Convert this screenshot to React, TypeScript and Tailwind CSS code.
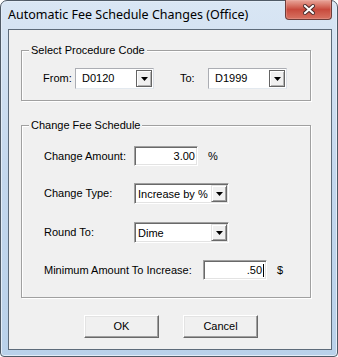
import React from 'react';

const body = { fontFamily: '"Liberation Sans", Arial, sans-serif' };

function Arrow() {
  return (
    <svg width="7" height="4" viewBox="0 0 7 4">
      <polygon points="0,0 7,0 3.5,4" fill="#000" />
    </svg>
  );
}

// editable combo (first group): thin themed border, framed button
function EditCombo({ value }: { value: string }) {
  return (
    <div className="flex h-[21px] w-[79px] shrink-0 items-center border border-t-[#abadb3] border-l-[#abadb3] border-r-[#dbdfe6] border-b-[#e3e9ef] bg-white pl-[6px] pr-px">
      <span className="flex-1 whitespace-nowrap text-[11px] leading-none text-black">{value}</span>
      <div className="flex h-[17px] w-[16px] items-center justify-center border border-[#646464] bg-[#f0f0f0] shadow-[inset_1px_1px_0_#fff,inset_-1px_-1px_0_#b4b4b4]">
        <Arrow />
      </div>
    </div>
  );
}

// drop-down list: classic sunken frame, raised button
function ListCombo({ value }: { value: string }) {
  return (
    <div className="flex h-[21px] w-[95px] shrink-0 items-center border border-t-[#a0a0a0] border-l-[#a0a0a0] border-r-white border-b-white bg-white pl-[3px] pr-px shadow-[inset_1px_1px_0_#696969,inset_-1px_-1px_0_#e3e3e3]">
      <span className="flex-1 whitespace-nowrap pt-px text-[11px] leading-none text-black">{value}</span>
      <div className="flex h-[17px] w-[16px] items-center justify-center border border-t-[#e3e3e3] border-l-[#e3e3e3] border-r-[#696969] border-b-[#696969] bg-[#f0f0f0] shadow-[inset_1px_1px_0_#fff,inset_-1px_-1px_0_#a0a0a0]">
        <Arrow />
      </div>
    </div>
  );
}

function TextBox({ value, caret }: { value: string; caret?: boolean }) {
  return (
    <div className="flex h-[20px] w-[64px] shrink-0 items-center justify-end border border-t-[#a0a0a0] border-l-[#a0a0a0] border-r-white border-b-white bg-white pr-[2px] shadow-[inset_1px_1px_0_#696969,inset_-1px_-1px_0_#e3e3e3]">
      <span className="text-[11px] leading-none text-black">{value}</span>
      {caret && <span className="ml-px h-[13px] w-px bg-black" />}
    </div>
  );
}

function Button({ label }: { label: string }) {
  return (
    <button className="flex h-[23px] w-[75px] items-center justify-center border border-t-white border-l-white border-r-[#696969] border-b-[#696969] bg-[#f0f0f0] text-[11px] text-black shadow-[inset_-1px_-1px_0_#a0a0a0,inset_1px_1px_0_#e3e3e3]">
      {label}
    </button>
  );
}

function Group({ title, className, children }: { title: string; className: string; children: React.ReactNode }) {
  return (
    <div className={`relative ml-[12px] w-[290px] border border-[#a0a0a0] shadow-[1px_1px_0_#fff,inset_1px_1px_0_#fff] ${className}`}>
      <span className="absolute -top-[8px] left-[7px] whitespace-nowrap bg-[#f0f0f0] px-[2px] text-[11px] leading-[14px] text-black">
        {title}
      </span>
      {children}
    </div>
  );
}

const label = 'shrink-0 whitespace-nowrap text-[11px] text-black';

export default function App() {
  return (
    <div className="h-[357px] w-[338px] bg-white">
      <div className="flex h-full w-full flex-col rounded-t-[7px] rounded-b-[4px] border border-[#4f5a66] bg-gradient-to-b from-[#d9e6f4] via-[#c3d7ed] to-[#b9d1ea] shadow-[inset_0_0_0_1px_#e3edf8]">
        {/* title bar */}
        <div className="flex h-[28px] items-start justify-between">
          <span
            className="ml-[7px] mt-[6px] whitespace-nowrap text-[12.5px] leading-[16px] text-black"
            style={{ fontFamily: '"Noto Sans", "Open Sans", sans-serif' }}
          >
            Automatic Fee Schedule Changes (Office)
          </span>
          <div className="-mt-px mr-[5px] flex h-[20px] w-[47px] items-center justify-center rounded-b-[4px] border border-t-0 border-[#6e3d3a] bg-gradient-to-b from-[#e8a69b] via-[#c84a3d] to-[#d77262] shadow-[inset_0_0_0_1px_#f0b5aa55]">
            <svg width="12" height="11" viewBox="0 0 12 11">
              <path d="M2 2 L10 9 M10 2 L2 9" stroke="#4a2a2a" strokeWidth="4" strokeLinecap="square" />
              <path d="M2 2 L10 9 M10 2 L2 9" stroke="#ffffff" strokeWidth="2" strokeLinecap="square" />
            </svg>
          </div>
        </div>

        {/* client area */}
        <div className="ml-[7px] flex h-[321px] w-[324px] flex-col border border-[#5d6b7a] bg-[#f0f0f0]" style={body}>
          <Group title="Select Procedure Code" className="mt-[20px] h-[51px]">
            <div className="flex items-center pl-[21px] pt-[17px]">
              <span className={`w-[32px] ${label}`}>From:</span>
              <EditCombo value="D0120" />
              <span className={`ml-[26px] w-[28px] ${label}`}>To:</span>
              <EditCombo value="D1999" />
            </div>
          </Group>

          <Group title="Change Fee Schedule" className="mt-[24px] h-[173px]">
            <div className="flex flex-col pl-[22px] pt-[20px]">
              <div className="flex items-center">
                <span className={`w-[90px] ${label}`}>Change Amount:</span>
                <TextBox value="3.00" />
                <span className={`ml-[10px] ${label}`}>%</span>
              </div>
              <div className="mt-[17px] flex items-center">
                <span className={`w-[90px] ${label}`}>Change Type:</span>
                <ListCombo value="Increase by %" />
              </div>
              <div className="mt-[18px] flex items-center">
                <span className={`w-[90px] ${label}`}>Round To:</span>
                <ListCombo value="Dime" />
              </div>
              <div className="mt-[17px] flex items-center">
                <span className={`w-[159px] ${label}`}>Minimum Amount To Increase:</span>
                <TextBox value=".50" caret />
                <span className={`ml-[10px] ${label}`}>$</span>
              </div>
            </div>
          </Group>

          <div className="ml-[75px] mt-[17px] flex gap-[24px]">
            <Button label="OK" />
            <Button label="Cancel" />
          </div>
        </div>
      </div>
    </div>
  );
}
